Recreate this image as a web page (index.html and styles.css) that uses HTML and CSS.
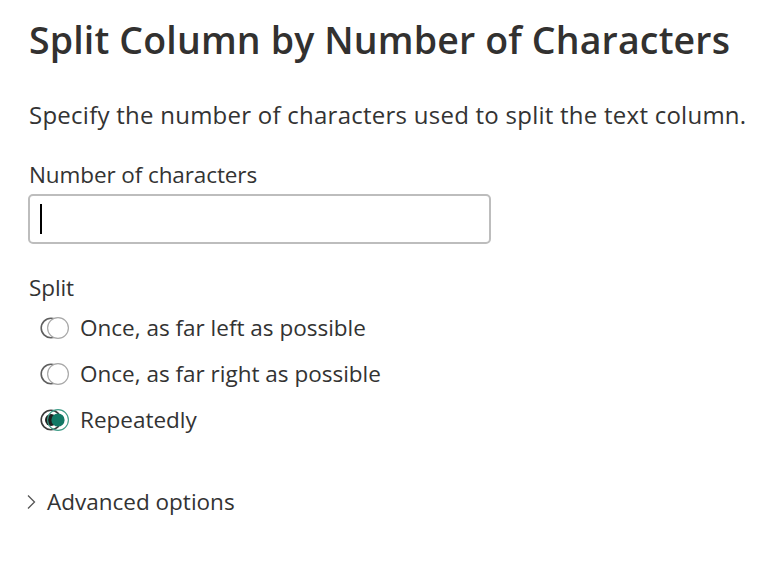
FILE: index.html
```html
<!DOCTYPE html>
<html>
<head>
<meta charset="utf-8">
<link rel="stylesheet" href="styles.css">
</head>
<body>
<div class="dialog">
  <h1 class="title">Split Column by Number of Characters</h1>
  <p class="desc">Specify the number of characters used to split the text column.</p>
  <div class="field">
    <label class="label">Number of characters</label>
    <div class="input"><span class="caret"></span></div>
  </div>
  <div class="group">
    <div class="label">Split</div>
    <div class="options">
      <div class="option">
        <svg class="radio" width="32" height="24" viewBox="0 0 32 24">
          <circle cx="11" cy="12" r="9.8" fill="#fff" stroke="#5f5f5f" stroke-width="1.6"/>
          <circle cx="18" cy="12" r="10.4" fill="#fff" stroke="#a8a8a8" stroke-width="1.2"/>
        </svg>
        <span>Once, as far left as possible</span>
      </div>
      <div class="option">
        <svg class="radio" width="32" height="24" viewBox="0 0 32 24">
          <circle cx="11" cy="12" r="9.8" fill="#fff" stroke="#5f5f5f" stroke-width="1.6"/>
          <circle cx="18" cy="12" r="10.4" fill="#fff" stroke="#a8a8a8" stroke-width="1.2"/>
        </svg>
        <span>Once, as far right as possible</span>
      </div>
      <div class="option">
        <svg class="radio" width="32" height="24" viewBox="0 0 32 24">
          <circle cx="11" cy="12" r="9.8" fill="#fff" stroke="#3a3a3a" stroke-width="1.6"/>
          <circle cx="11" cy="12" r="6" fill="#1f1f1f"/>
          <circle cx="18" cy="12" r="10.4" fill="none" stroke="#3f9c88" stroke-width="1.1"/>
          <circle cx="18" cy="12" r="6.6" fill="#117865"/>
        </svg>
        <span>Repeatedly</span>
      </div>
    </div>
  </div>
  <div class="advanced">
    <svg class="chev" width="10" height="16" viewBox="0 0 10 16">
      <path d="M2 1.5 L8.5 8 L2 14.5" fill="none" stroke="#555" stroke-width="1.3"/>
    </svg>
    <span>Advanced options</span>
  </div>
</div>
</body>
</html>
```
FILE: styles.css
```css
html, body {
  margin: 0;
  padding: 0;
  background: #ffffff;
}
body {
  font-family: "Open Sans", "Noto Sans", sans-serif;
  color: #333333;
}
.dialog {
  padding: 20px 0 0 29px;
  display: flex;
  flex-direction: column;
}
.title {
  margin: 0;
  font-size: 37.5px;
  font-weight: 600;
  line-height: 40px;
  color: #323130;
  letter-spacing: 0.15px;
}
.desc {
  margin: 40px 0 0 0;
  font-size: 24px;
  line-height: 30px;
  letter-spacing: 0.25px;
}
.field {
  margin-top: 30px;
  display: flex;
  flex-direction: column;
}
.label {
  font-size: 22.5px;
  line-height: 30px;
  letter-spacing: -0.1px;
}
.input {
  margin-top: 4px;
  width: 449px;
  height: 46px;
  border: 2px solid #bdbdbd;
  border-radius: 5px;
  display: flex;
  align-items: center;
  padding-left: 10px;
  box-sizing: content-box;
  margin-left: -1px;
}
.caret {
  width: 2px;
  height: 30px;
  background: #000;
}
.group {
  margin-top: 29px;
}
.options {
  margin-top: 9px;
  display: flex;
  flex-direction: column;
  gap: 16px;
  padding-left: 11px;
}
.option {
  display: flex;
  align-items: center;
  height: 30px;
  gap: 8px;
  font-size: 22.5px;
}
.radio {
  flex: none;
  margin-top: 2px;
}
.advanced {
  margin-top: 52px;
  display: flex;
  align-items: center;
  height: 30px;
  gap: 11px;
  font-size: 22.5px;
  margin-left: -3px;
}
.chev {
  flex: none;
  margin-top: 2px;
}
```
